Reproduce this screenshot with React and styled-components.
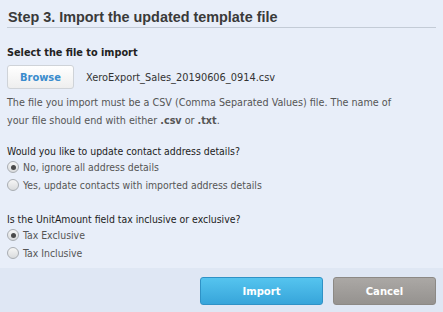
import styled, { createGlobalStyle } from "styled-components";

const GlobalStyle = createGlobalStyle`
    html, body {
        margin: 0;
        padding: 0;
        background: #e8eef9;
    }
`;

const Page = styled.div`
    width: 443px;
    height: 312px;
    display: flex;
    flex-direction: column;
    background: #e8eef9;
    font-family: "DejaVu Sans Condensed", "DejaVu Sans", sans-serif;
    font-stretch: condensed;
    font-size: 10.4px;
    color: #555;
    overflow: hidden;
`;

const Content = styled.div`
    padding: 8px 7px 0;
    display: flex;
    flex-direction: column;
`;

const Heading = styled.h2`
    margin: 0;
    padding-left: 1px;
    font-family: "Liberation Sans", Arial, sans-serif;
    font-stretch: normal;
    font-size: 14.4px;
    font-weight: bold;
    line-height: 19px;
    color: #3a3a3a;
    border-bottom: 1px solid #c3cbd6;
`;

const Label = styled.div`
    margin-top: ${(props) => props.top || 0}px;
    font-weight: ${(props) => props.bold ? "bold" : "normal"};
    font-size: ${(props) => props.bold ? "10.8px" : "10.4px"};
    line-height: 14px;
    color: #222;
`;

const FileRow = styled.div`
    margin-top: 5px;
    display: flex;
    align-items: center;
    gap: 12px;
    height: 24px;
`;

const BrowseButton = styled.button`
    width: 67px;
    height: 24px;
    border: 1px solid #cfd3d8;
    border-radius: 3px;
    background: linear-gradient(#ffffff, #eeeeee);
    font-family: inherit;
    font-stretch: condensed;
    font-weight: bold;
    font-size: 11px;
    color: #3a8ccd;
    padding: 0;
`;

const FileName = styled.span`
    font-size: 10.9px;
    color: #333;
`;

const Paragraph = styled.p`
    margin: 5px 0 0;
    font-size: 10.7px;
    line-height: 18px;
    color: #555;
`;

const Group = styled.div`
    margin-top: ${(props) => props.top}px;
    display: flex;
    flex-direction: column;
`;

const RadioRow = styled.label`
    display: flex;
    align-items: center;
    gap: 4px;
    height: 18px;
    color: #555;
`;

const RadioDot = styled.span`
    position: relative;
    width: 10px;
    height: 10px;
    border-radius: 50%;
    border: 1px solid #a9adb2;
    background: linear-gradient(#f6f6f6, #d9dbdd);
    flex-shrink: 0;

    &::after {
        content: "";
        display: ${(props) => props.checked ? "block" : "none"};
        position: absolute;
        left: 2.5px;
        top: 2.5px;
        width: 5px;
        height: 5px;
        border-radius: 50%;
        background: #4a4a4a;
    }
`;

const Footer = styled.div`
    margin-top: auto;
    height: 44px;
    box-sizing: border-box;
    padding: 9px 7px 0 0;
    display: flex;
    justify-content: flex-end;
    gap: 10px;
    background: #dfe7f4;
`;

const ActionButton = styled.button`
    width: ${(props) => props.width}px;
    height: 28px;
    border-radius: 3px;
    border: 1px solid ${(props) => props.primary ? "#2f92c6" : "#8c8985"};
    background: ${(props) => props.primary
        ? "linear-gradient(#55c4ef, #37a5da)"
        : "linear-gradient(#aba8a5, #95928f)"};
    color: #fff;
    font-family: inherit;
    font-stretch: condensed;
    font-weight: bold;
    font-size: 11.2px;
    padding: 0;
`;

const Radio = ({ checked, children }) => (
    <RadioRow>
        <RadioDot checked={checked} />
        {children}
    </RadioRow>
);

export default function App() {
    return (
        <Page>
            <GlobalStyle />
            <Content>
                <Heading>Step 3. Import the updated template file</Heading>
                <Label bold top={18}>Select the file to import</Label>
                <FileRow>
                    <BrowseButton>Browse</BrowseButton>
                    <FileName>XeroExport_Sales_20190606_0914.csv</FileName>
                </FileRow>
                <Paragraph>
                    The file you import must be a CSV (Comma Separated Values) file. The name of
                    <br />
                    your file should end with either <b>.csv</b> or <b>.txt</b>.
                </Paragraph>
                <Group top={14}>
                    <Label>Would you like to update contact address details?</Label>
                    <Radio checked>No, ignore all address details</Radio>
                    <Radio>Yes, update contacts with imported address details</Radio>
                </Group>
                <Group top={18}>
                    <Label>Is the UnitAmount field tax inclusive or exclusive?</Label>
                    <Radio checked>Tax Exclusive</Radio>
                    <Radio>Tax Inclusive</Radio>
                </Group>
            </Content>
            <Footer>
                <ActionButton primary width={123}>Import</ActionButton>
                <ActionButton width={103}>Cancel</ActionButton>
            </Footer>
        </Page>
    );
}
